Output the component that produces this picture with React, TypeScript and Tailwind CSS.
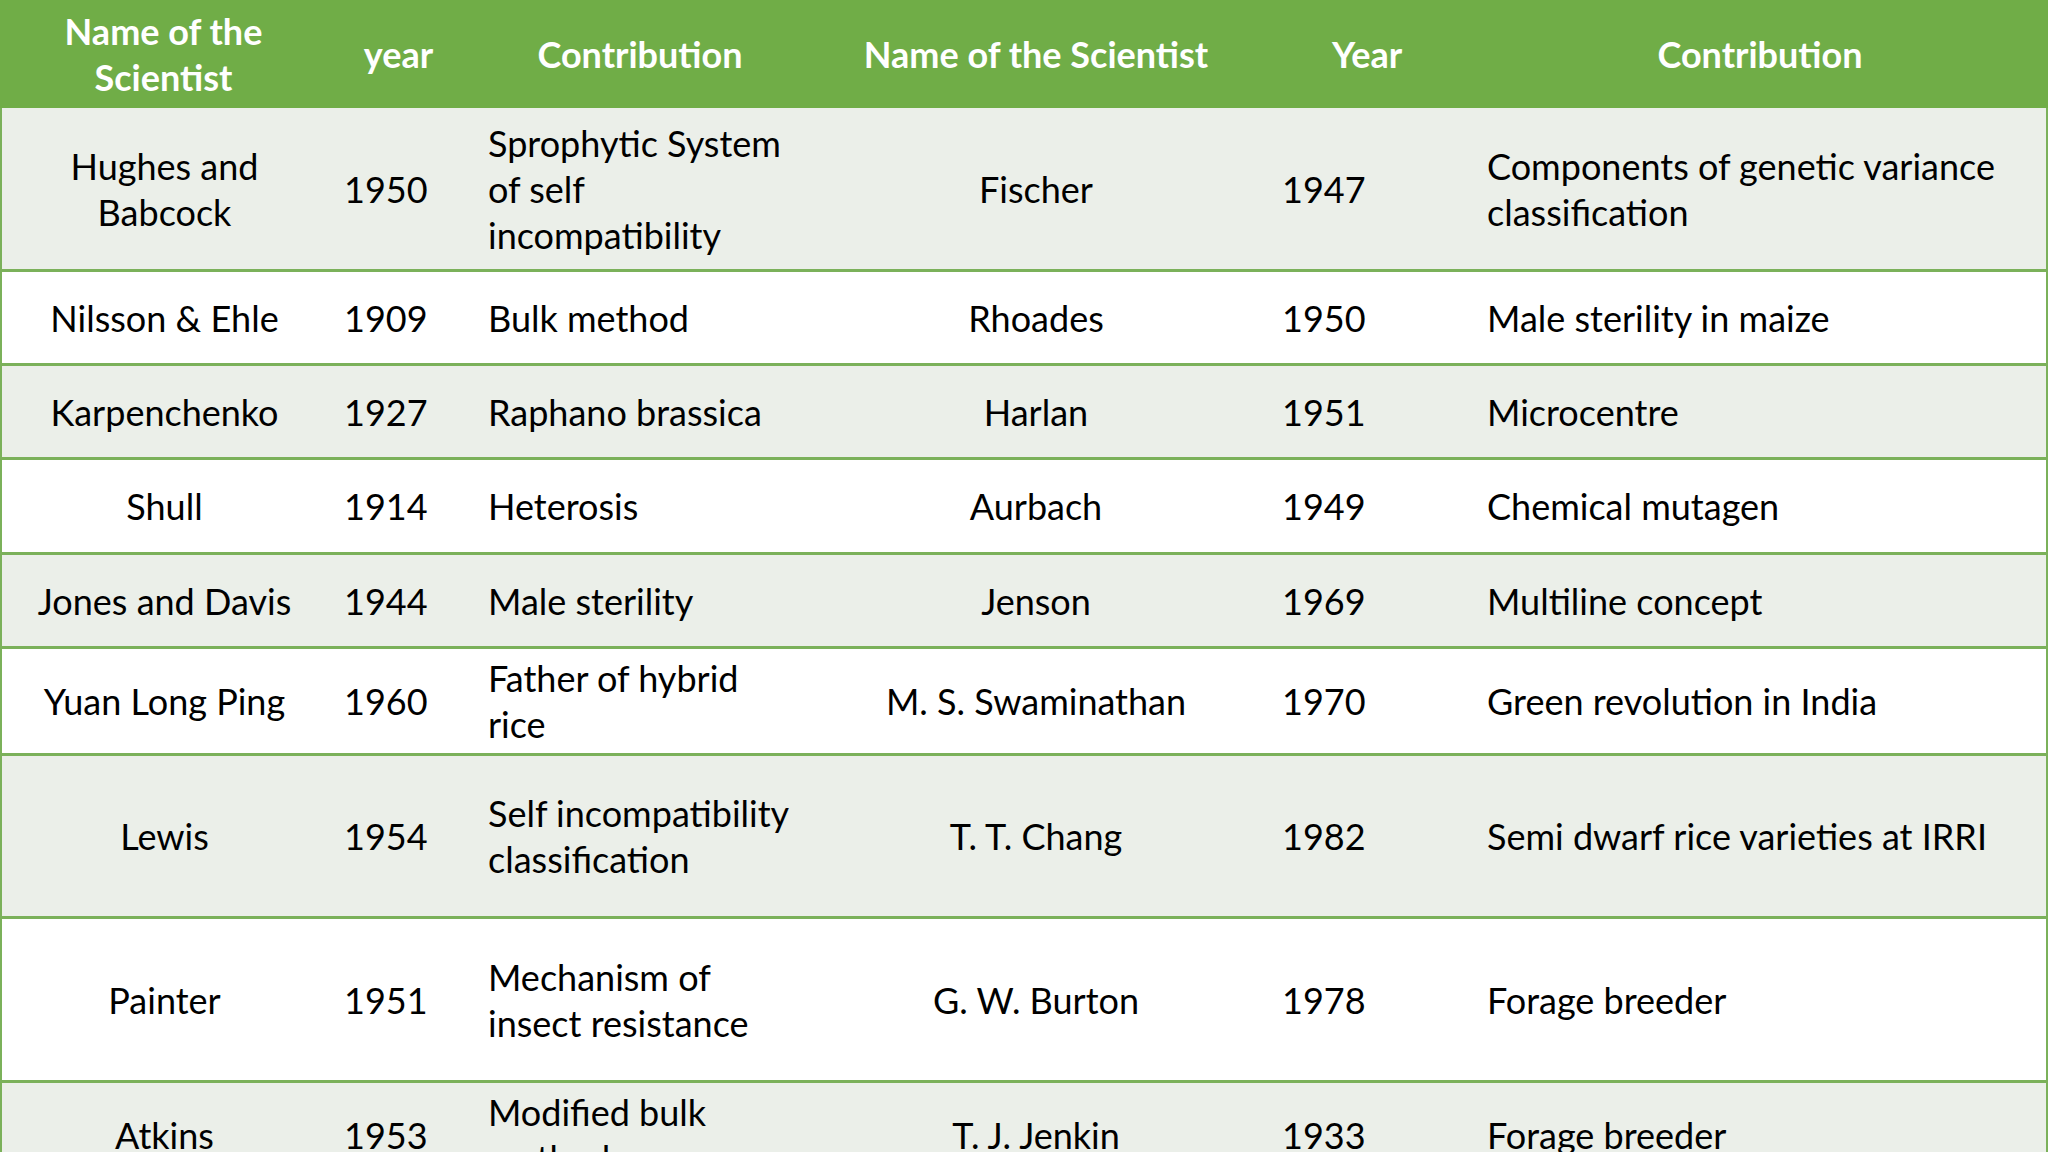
import React from "react";

type Row = {
	h: string;
	bg: string;
	name1: string[];
	year1: string;
	contrib1: string[];
	name2: string[];
	year2: string;
	contrib2: string[];
};

const ODD = "bg-[#ebefe9]";
const EVEN = "bg-white";

const rows: Row[] = [
	{ h: "h-[164px]", bg: ODD, name1: ["Hughes and", "Babcock"], year1: "1950", contrib1: ["Sprophytic System", "of self", "incompatibility"], name2: ["Fischer"], year2: "1947", contrib2: ["Components of genetic variance", "classification"] },
	{ h: "h-[94px]", bg: EVEN, name1: ["Nilsson & Ehle"], year1: "1909", contrib1: ["Bulk method"], name2: ["Rhoades"], year2: "1950", contrib2: ["Male sterility in maize"] },
	{ h: "h-[94px]", bg: ODD, name1: ["Karpenchenko"], year1: "1927", contrib1: ["Raphano brassica"], name2: ["Harlan"], year2: "1951", contrib2: ["Microcentre"] },
	{ h: "h-[95px]", bg: EVEN, name1: ["Shull"], year1: "1914", contrib1: ["Heterosis"], name2: ["Aurbach"], year2: "1949", contrib2: ["Chemical mutagen"] },
	{ h: "h-[94px]", bg: ODD, name1: ["Jones and Davis"], year1: "1944", contrib1: ["Male sterility"], name2: ["Jenson"], year2: "1969", contrib2: ["Multiline concept"] },
	{ h: "h-[107px]", bg: EVEN, name1: ["Yuan Long Ping"], year1: "1960", contrib1: ["Father of hybrid", "rice"], name2: ["M. S. Swaminathan"], year2: "1970", contrib2: ["Green revolution in India"] },
	{ h: "h-[163px]", bg: ODD, name1: ["Lewis"], year1: "1954", contrib1: ["Self incompatibility", "classification"], name2: ["T. T. Chang"], year2: "1982", contrib2: ["Semi dwarf rice varieties at IRRI"] },
	{ h: "h-[164px]", bg: EVEN, name1: ["Painter"], year1: "1951", contrib1: ["Mechanism of", "insect resistance"], name2: ["G. W. Burton"], year2: "1978", contrib2: ["Forage breeder"] },
	{ h: "h-[107px]", bg: ODD, name1: ["Atkins"], year1: "1953", contrib1: ["Modified bulk", "method"], name2: ["T. J. Jenkin"], year2: "1933", contrib2: ["Forage breeder"] },
];

const Lines = ({ lines }: { lines: string[] }) => (
	<>
		{lines.map((l, i) => (
			<div key={i} className="whitespace-nowrap">
				{l}
			</div>
		))}
	</>
);

export default function App() {
	return (
		<div
			className="w-[2048px] h-[1152px] overflow-hidden bg-white text-[36px] leading-[46px] text-black"
			style={{ fontFamily: "Lato, 'Liberation Sans', sans-serif" }}>
			{/* header */}
			<div className="flex h-[108px] bg-[#70ad47] text-white font-bold items-center">
				<div className="w-[327px] text-center">
					<div>Name of the</div>
					<div>Scientist</div>
				</div>
				<div className="w-[143px] text-center">year</div>
				<div className="w-[340px] text-center">Contribution</div>
				<div className="w-[452px] text-center">Name of the Scientist</div>
				<div className="w-[210px] text-center">Year</div>
				<div className="w-[576px] text-center">Contribution</div>
			</div>

			{/* body */}
			<div className="border-x-2 border-[#7bb15a]">
				{rows.map((r, i) => (
					<div
						key={i}
						className={`flex items-center border-b-[3px] border-[#7bb15a] ${r.h} ${r.bg}`}>
						<div className="w-[325px] text-center">
							<Lines lines={r.name1} />
						</div>
						<div className="w-[143px] pl-[17px]">{r.year1}</div>
						<div className="w-[340px] pl-[18px]">
							<Lines lines={r.contrib1} />
						</div>
						<div className="w-[452px] text-center">
							<Lines lines={r.name2} />
						</div>
						<div className="w-[210px] pl-[20px]">{r.year2}</div>
						<div className="w-[574px] pl-[15px]">
							<Lines lines={r.contrib2} />
						</div>
					</div>
				))}
			</div>
		</div>
	);
}
